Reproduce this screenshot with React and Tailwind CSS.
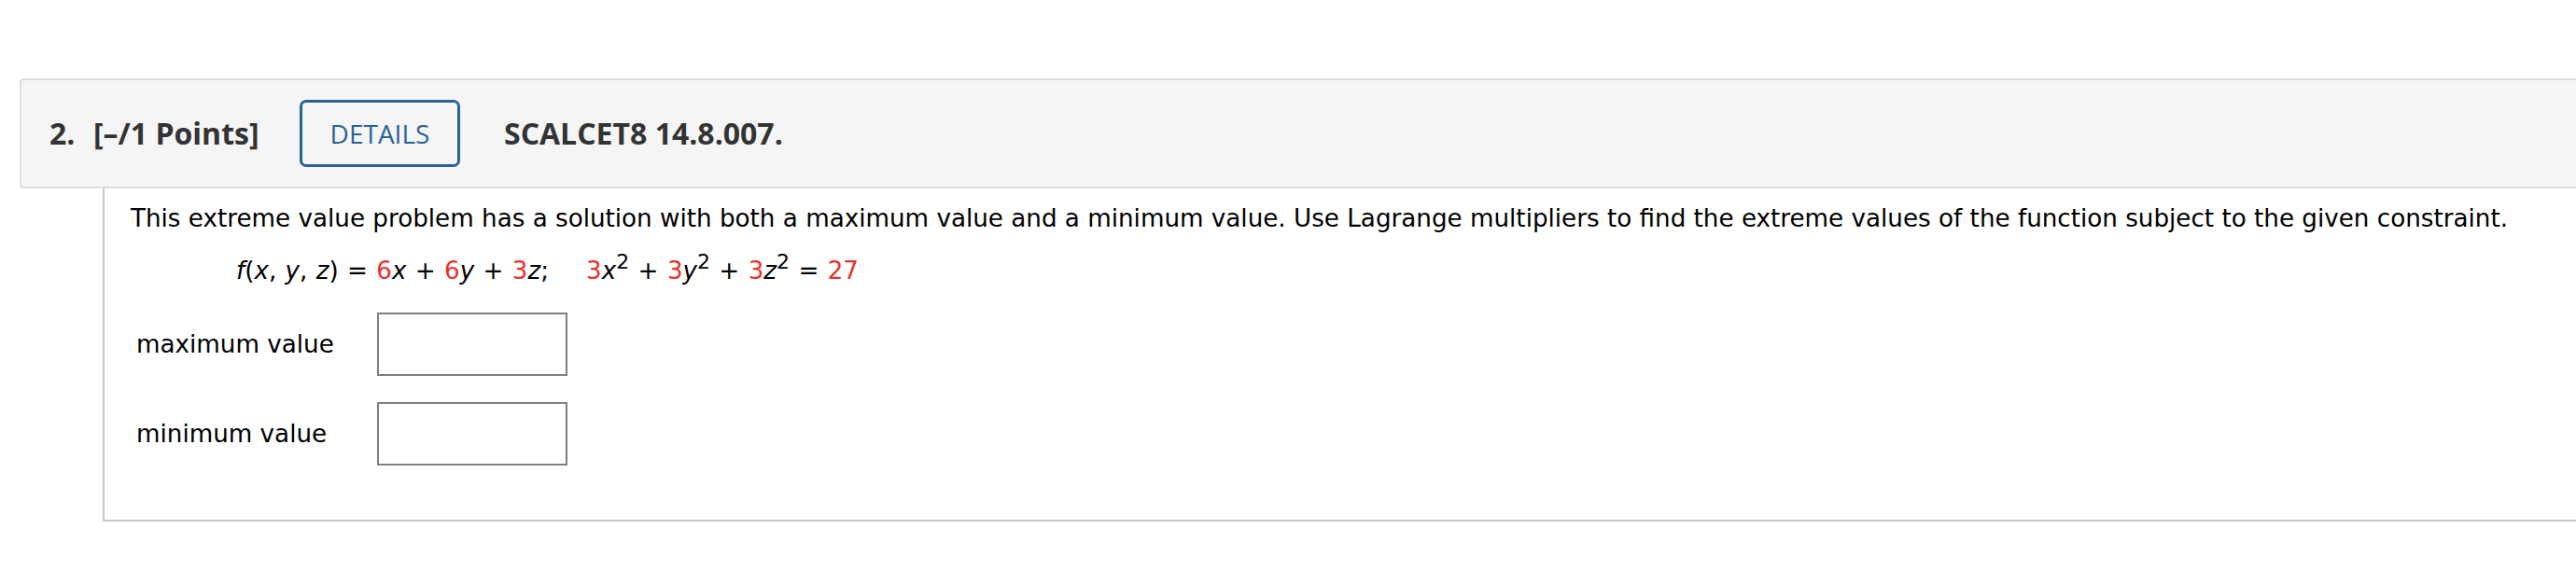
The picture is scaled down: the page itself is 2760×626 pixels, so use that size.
import React from 'react';

const Red = ({ children }) => <span className="text-[#e8332a]">{children}</span>;
const V = ({ children }) => <i>{children}</i>;

const AnswerRow = ({ label }) => (
    <div className="flex items-center">
        <span className="w-[264px] pl-[6px] leading-[32px]">{label}</span>
        <div className="w-[204px] h-[68px] border-2 border-[#808080] bg-white" />
    </div>
);

export default function App() {
    return (
        <div className="w-[2760px] h-[626px] overflow-hidden bg-white pt-[84px] pl-[21px]">
            {/* question header */}
            <div className="h-[118px] w-[2760px] flex items-center pl-[30px] bg-[#f5f5f5] border-2 border-[#dddddd] rounded-[4px] font-['Open_Sans',sans-serif] font-bold text-[32px] text-[#333333] whitespace-nowrap">
                <span className="w-[47px]">2.</span>
                <span className="w-[221px]">[–/1 Points]</span>
                <button className="w-[172px] h-[72px] border-[3px] border-[#2a6496] rounded-[7px] font-normal text-[#2a6496] text-[28px]">
                    DETAILS
                </button>
                <span className="ml-[47px]">SCALCET8 14.8.007.</span>
            </div>

            {/* question body */}
            <div className="ml-[89px] w-[2700px] border-l-2 border-b-2 border-[#c8c8c8] pt-[16px] pb-[58px] pl-[28px] font-['DejaVu_Sans',Verdana,sans-serif] text-[26.2px] text-black">
                <p className="leading-[32px] whitespace-nowrap">
                    This extreme value problem has a solution with both a maximum value and a minimum value. Use Lagrange multipliers to find the extreme values of the function subject to the given constraint.
                </p>
                <p className="leading-[32px] mt-[24px] pl-[113px] whitespace-nowrap [word-spacing:1px]">
                    <V>f</V>(<V>x</V>, <V>y</V>, <V>z</V>) = <Red>6</Red><V>x</V> + <Red>6</Red><V>y</V> + <Red>3</Red><V>z</V>;
                    <span className="ml-[40px]" />
                    <Red>3</Red><V>x</V><sup className="text-[22px]">2</sup> + <Red>3</Red><V>y</V><sup className="text-[22px]">2</sup> + <Red>3</Red><V>z</V><sup className="text-[22px]">2</sup> = <Red>27</Red>
                </p>
                <div className="mt-[29px] flex flex-col gap-[28px]">
                    <AnswerRow label="maximum value" />
                    <AnswerRow label="minimum value" />
                </div>
            </div>
        </div>
    );
}
